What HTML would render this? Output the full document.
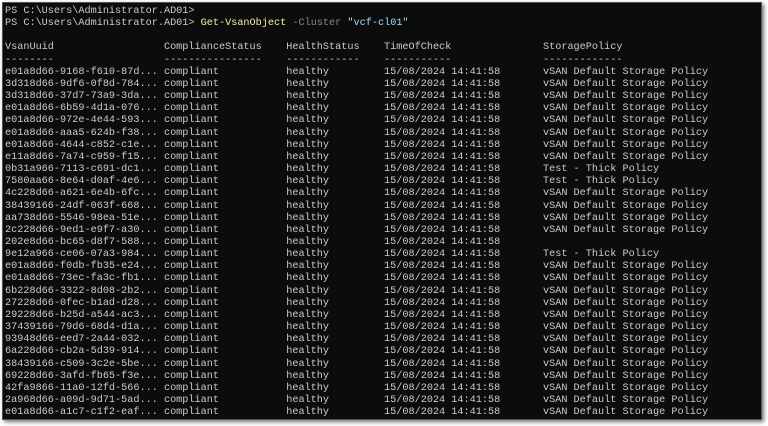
<!DOCTYPE html>
<html><head><meta charset="utf-8"><style>
html,body{margin:0;padding:0;background:#fff;width:768px;height:426px;overflow:hidden}
.term{position:absolute;left:2px;top:2px;width:758px;height:416px;background:#0c0c0c;border:1px solid #555;box-shadow:2px 2px 4px rgba(0,0,0,.55)}
pre{position:absolute;left:2px;top:3px;margin:0;font-family:"Liberation Mono","DejaVu Sans Mono",monospace;font-size:10.2px;line-height:12.15px;color:#cccccc;white-space:pre}
.y{color:#f9f1a5}.g{color:#8a8a8a}.b{color:#9cdcfe}
</style></head><body><div class="term"><pre>PS C:\Users\Administrator.AD01>
PS C:\Users\Administrator.AD01> <span class="y">Get-VsanObject</span> <span class="g">-Cluster</span> <span class="b">"vcf-cl01"</span>

VsanUuid                  ComplianceStatus    HealthStatus    TimeOfCheck               StoragePolicy
--------                  ----------------    ------------    -----------               -------------
e01a8d66-9168-f610-87d... compliant           healthy         15/08/2024 14:41:58       vSAN Default Storage Policy
3d318d66-9df6-0f8d-784... compliant           healthy         15/08/2024 14:41:58       vSAN Default Storage Policy
3d318d66-37d7-73a9-3da... compliant           healthy         15/08/2024 14:41:58       vSAN Default Storage Policy
e01a8d66-6b59-4d1a-076... compliant           healthy         15/08/2024 14:41:58       vSAN Default Storage Policy
e01a8d66-972e-4e44-593... compliant           healthy         15/08/2024 14:41:58       vSAN Default Storage Policy
e01a8d66-aaa5-624b-f38... compliant           healthy         15/08/2024 14:41:58       vSAN Default Storage Policy
e01a8d66-4644-c852-c1e... compliant           healthy         15/08/2024 14:41:58       vSAN Default Storage Policy
e11a8d66-7a74-c959-f15... compliant           healthy         15/08/2024 14:41:58       vSAN Default Storage Policy
0b31a966-7113-c691-dc1... compliant           healthy         15/08/2024 14:41:58       Test - Thick Policy
7580aa66-8e64-d0af-4e6... compliant           healthy         15/08/2024 14:41:58       Test - Thick Policy
4c228d66-a621-6e4b-6fc... compliant           healthy         15/08/2024 14:41:58       vSAN Default Storage Policy
38439166-24df-063f-668... compliant           healthy         15/08/2024 14:41:58       vSAN Default Storage Policy
aa738d66-5546-98ea-51e... compliant           healthy         15/08/2024 14:41:58       vSAN Default Storage Policy
2c228d66-9ed1-e9f7-a30... compliant           healthy         15/08/2024 14:41:58       vSAN Default Storage Policy
202e8d66-bc65-d8f7-588... compliant           healthy         15/08/2024 14:41:58
9e12a966-ce06-07a3-984... compliant           healthy         15/08/2024 14:41:58       Test - Thick Policy
e01a8d66-f0db-fb35-e24... compliant           healthy         15/08/2024 14:41:58       vSAN Default Storage Policy
e01a8d66-73ec-fa3c-fb1... compliant           healthy         15/08/2024 14:41:58       vSAN Default Storage Policy
6b228d66-3322-8d08-2b2... compliant           healthy         15/08/2024 14:41:58       vSAN Default Storage Policy
27228d66-0fec-b1ad-d28... compliant           healthy         15/08/2024 14:41:58       vSAN Default Storage Policy
29228d66-b25d-a544-ac3... compliant           healthy         15/08/2024 14:41:58       vSAN Default Storage Policy
37439166-79d6-68d4-d1a... compliant           healthy         15/08/2024 14:41:58       vSAN Default Storage Policy
93948d66-eed7-2a44-032... compliant           healthy         15/08/2024 14:41:58       vSAN Default Storage Policy
6a228d66-cb2a-5d39-914... compliant           healthy         15/08/2024 14:41:58       vSAN Default Storage Policy
38439166-c509-3c2e-5be... compliant           healthy         15/08/2024 14:41:58       vSAN Default Storage Policy
69228d66-3afd-fb65-f3e... compliant           healthy         15/08/2024 14:41:58       vSAN Default Storage Policy
42fa9866-11a0-12fd-566... compliant           healthy         15/08/2024 14:41:58       vSAN Default Storage Policy
2a968d66-a09d-9d71-5ad... compliant           healthy         15/08/2024 14:41:58       vSAN Default Storage Policy
e01a8d66-a1c7-c1f2-eaf... compliant           healthy         15/08/2024 14:41:58       vSAN Default Storage Policy</pre></div></body></html>
